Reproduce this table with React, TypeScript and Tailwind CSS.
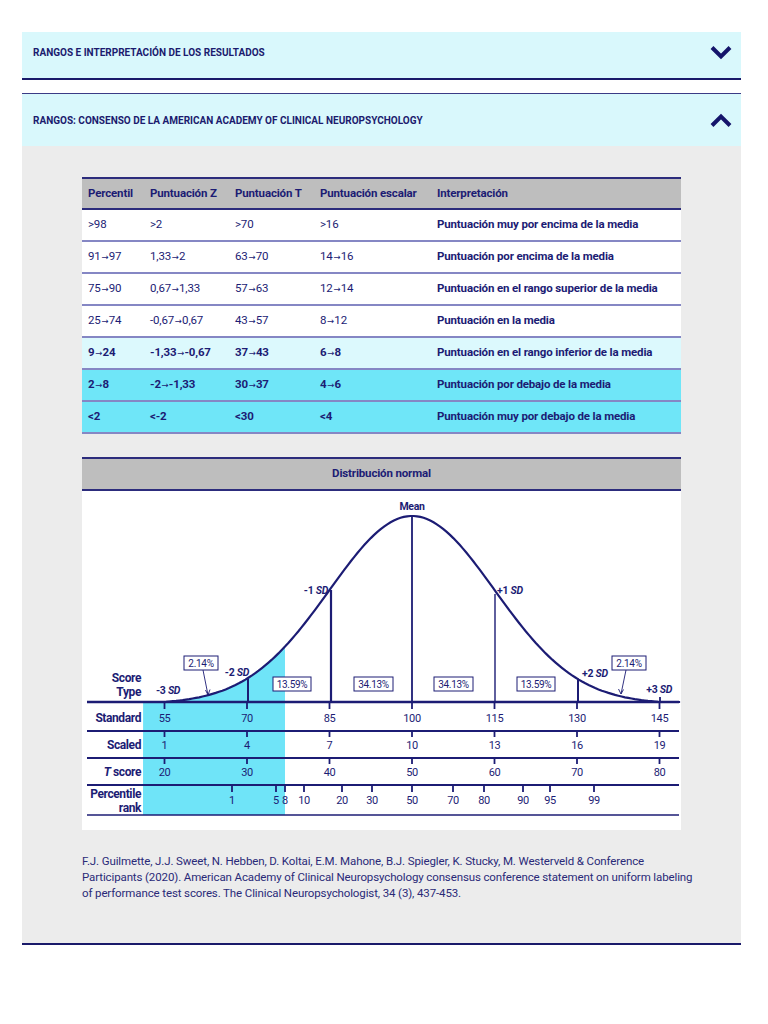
const NAVY = '#1c1c74';
const FONT = 'Roboto, "Liberation Sans", sans-serif';

const rows = [
  { p: '>98', z: '>2', t: '>70', e: '>16', text: 'Puntuación muy por encima de la media', bg: 'bg-white', bold: false },
  { p: '91→97', z: '1,33→2', t: '63→70', e: '14→16', text: 'Puntuación por encima de la media', bg: 'bg-white', bold: false },
  { p: '75→90', z: '0,67→1,33', t: '57→63', e: '12→14', text: 'Puntuación en el rango superior de la media', bg: 'bg-white', bold: false },
  { p: '25→74', z: '-0,67→0,67', t: '43→57', e: '8→12', text: 'Puntuación en la media', bg: 'bg-white', bold: false },
  { p: '9→24', z: '-1,33→-0,67', t: '37→43', e: '6→8', text: 'Puntuación en el rango inferior de la media', bg: 'bg-[#dcf9fd]', bold: true },
  { p: '2→8', z: '-2→-1,33', t: '30→37', e: '4→6', text: 'Puntuación por debajo de la media', bg: 'bg-[#6fe6f8]', bold: true },
  { p: '<2', z: '<-2', t: '<30', e: '<4', text: 'Puntuación muy por debajo de la media', bg: 'bg-[#6fe6f8]', bold: true },
];

// small arrow between range bounds
function Range({ value }: { value: string }) {
  const parts = value.split('→');
  return (
    <span className="whitespace-nowrap">
      {parts.map((part, i) => (
        <span key={i}>
          {i > 0 && <span className="font-['DejaVu_Sans',sans-serif] font-normal text-[8.5px] mx-[0.5px]">→</span>}
          {part}
        </span>
      ))}
    </span>
  );
}

function Chevron({ up }: { up?: boolean }) {
  return (
    <svg width="24" height="15" viewBox="0 0 24 15" className="shrink-0">
      <polyline
        points={up ? '3,12.5 12,3.5 21,12.5' : '3,2.5 12,11.5 21,2.5'}
        fill="none"
        stroke="#15156b"
        strokeWidth="4"
        strokeLinejoin="miter"
      />
    </svg>
  );
}

function AccordionHeader({ title, up }: { title: string; up?: boolean }) {
  return (
    <div className="flex items-center justify-between pl-[11px] pr-[8px] h-full">
      <span className="text-[10px] font-bold tracking-[0px] text-[#1b1b6e] uppercase">{title}</span>
      <Chevron up={up} />
    </div>
  );
}

const X = (z: number) => 412 + 82.5 * z;
const Y = (z: number) => 704 - 188 * Math.exp((-z * z) / 2);

function curvePoints(from: number, to: number) {
  const pts: string[] = [];
  for (let z = from; z < to; z += 0.04) pts.push(`${X(z).toFixed(1)},${Math.min(Y(z), 702).toFixed(1)}`);
  pts.push(`${X(to).toFixed(1)},${Math.min(Y(to), 702).toFixed(1)}`);
  return pts;
}

function PctBox({ x, y, w, label }: { x: number; y: number; w: number; label: string }) {
  return (
    <g>
      <rect x={x} y={y} width={w} height={14} fill="white" stroke={NAVY} strokeWidth="1" />
      <text x={x + w / 2} y={y + 10.5} textAnchor="middle" fontSize="10" fill={NAVY} letterSpacing="-0.3">
        {label}
      </text>
    </g>
  );
}

function SdLabel({ x, y, sign, anchor }: { x: number; y: number; sign: string; anchor?: 'start' | 'middle' | 'end' }) {
  return (
    <text x={x} y={y} textAnchor={anchor ?? 'start'} fontSize="10.5" fontWeight="700" fill={NAVY} letterSpacing="-0.3">
      {sign} <tspan fontStyle="italic">SD</tspan>
    </text>
  );
}

function Chart() {
  const curve = curvePoints(-3.26, 3.25);
  const fillZ = (285 - 412) / 82.5;
  const fill = curvePoints(-3.26, fillZ);
  const sds = [-3, -2, -1, 0, 1, 2, 3];
  const standard = ['55', '70', '85', '100', '115', '130', '145'];
  const scaled = ['1', '4', '7', '10', '13', '16', '19'];
  const tscore = ['20', '30', '40', '50', '60', '70', '80'];
  const pct = [
    ['1', 232], ['5', 276], ['8', 285], ['10', 304], ['20', 342], ['30', 372], ['50', 412],
    ['70', 453], ['80', 484], ['90', 523], ['95', 550], ['99', 594],
  ] as const;

  return (
    <svg width="599" height="339" viewBox="82 491 599 339" className="block" style={{ fontFamily: FONT }}>
      <rect x="82" y="491" width="599" height="339" fill="white" />
      <path d={`M${fill.join(' L')} L285,815 L143,815 Z`} fill="#6fe4f8" />
      <polyline points={curve.join(' ')} fill="none" stroke={NAVY} strokeWidth="2.2" />

      {/* SD verticals */}
      <line x1="412" y1="516" x2="412" y2="702" stroke={NAVY} strokeWidth="1.8" />
      <line x1="331" y1={Y(-1)} x2="331" y2="702" stroke={NAVY} strokeWidth="2.2" />
      <line x1="495" y1={Y(1) + 4} x2="495" y2="702" stroke={NAVY} strokeWidth="1.4" />
      <line x1="248" y1={Y(-2)} x2="248" y2="702" stroke={NAVY} strokeWidth="2" />
      <line x1="578" y1={Y(2)} x2="578" y2="702" stroke={NAVY} strokeWidth="2" />
      <line x1="660" y1="697" x2="660" y2="702" stroke={NAVY} strokeWidth="1.8" />

      {/* horizontal lines */}
      <line x1="87" y1="702" x2="679" y2="702" stroke={NAVY} strokeWidth="2.4" />
      <line x1="87" y1="731" x2="679" y2="731" stroke={NAVY} strokeWidth="2" />
      <line x1="87" y1="758" x2="679" y2="758" stroke={NAVY} strokeWidth="2" />
      <line x1="87" y1="785" x2="679" y2="785" stroke={NAVY} strokeWidth="2" />
      <line x1="87" y1="815" x2="679" y2="815" stroke={NAVY} strokeWidth="1.4" />

      {/* ticks and numbers */}
      {sds.map((z, i) => (
        <g key={z}>
          <line x1={X(z)} y1="702" x2={X(z)} y2="709" stroke={NAVY} strokeWidth="1.8" />
          <line x1={X(z)} y1="731" x2={X(z)} y2="737" stroke={NAVY} strokeWidth="1.8" />
          <line x1={X(z)} y1="758" x2={X(z)} y2="764" stroke={NAVY} strokeWidth="1.8" />
          <text x={X(z)} y="721.5" textAnchor="middle" fontSize="11" fill={NAVY} letterSpacing="-0.4">{standard[i]}</text>
          <text x={X(z)} y="749" textAnchor="middle" fontSize="11" fill={NAVY} letterSpacing="-0.4">{scaled[i]}</text>
          <text x={X(z)} y="776" textAnchor="middle" fontSize="11" fill={NAVY} letterSpacing="-0.4">{tscore[i]}</text>
        </g>
      ))}
      {pct.map(([v, x]) => (
        <g key={v}>
          <line x1={x} y1="785" x2={x} y2="792" stroke={NAVY} strokeWidth="1.8" />
          <text x={x} y="803.5" textAnchor="middle" fontSize="11" fill={NAVY} letterSpacing="-0.4">{v}</text>
        </g>
      ))}

      {/* row labels */}
      <g fontSize="12" fontWeight="700" fill={NAVY} textAnchor="end" letterSpacing="-0.4">
        <text x="141" y="682">Score</text>
        <text x="141" y="696">Type</text>
        <text x="141" y="722">Standard</text>
        <text x="141" y="749">Scaled</text>
        <text x="141" y="776"><tspan fontStyle="italic">T</tspan> score</text>
        <text x="141" y="798">Percentile</text>
        <text x="141" y="812">rank</text>
      </g>

      {/* SD labels */}
      <text x="412" y="510" textAnchor="middle" fontSize="10.5" fontWeight="700" fill={NAVY} letterSpacing="-0.3">Mean</text>
      <SdLabel x={328} y={594} sign="-1" anchor="end" />
      <SdLabel x={497} y={594} sign="+1" />
      <SdLabel x={249} y={676} sign="-2" anchor="end" />
      <SdLabel x={582} y={677} sign="+2" />
      <SdLabel x={156} y={694} sign="-3" />
      <SdLabel x={672} y={693} sign="+3" anchor="end" />

      {/* percentages */}
      <PctBox x={184} y={656} w={34} label="2.14%" />
      <line x1="203" y1="670" x2="208" y2="695" stroke={NAVY} strokeWidth="0.9" />
      <polyline points="205.5,690 208,695 210,689.5" fill="none" stroke={NAVY} strokeWidth="0.9" />
      <PctBox x={273} y={677} w={38} label="13.59%" />
      <PctBox x={354} y={677} w={39} label="34.13%" />
      <PctBox x={434} y={677} w={39} label="34.13%" />
      <PctBox x={517} y={677} w={38} label="13.59%" />
      <PctBox x={612} y={656} w={34} label="2.14%" />
      <line x1="626" y1="670" x2="621" y2="694" stroke={NAVY} strokeWidth="0.9" />
      <polyline points="618.5,689 621,694 623.5,689.5" fill="none" stroke={NAVY} strokeWidth="0.9" />
    </svg>
  );
}

export default function App() {
  return (
    <div className="bg-white min-h-[1024px] pt-[32px] px-[22px] text-[#1c1c74]" style={{ fontFamily: FONT }}>
      <div className="w-[719px]">
        {/* Accordion 1 (closed) */}
        <div className="h-[48px] pb-[5px] bg-[#d9f8fc] border-b-[2.5px] border-[#1a1a6a]">
          <AccordionHeader title="Rangos e interpretación de los resultados" />
        </div>

        {/* Accordion 2 (open) */}
        <div className="mt-[13px] h-[53px] bg-[#d9f8fc] border-t-[1.5px] border-[#3b3b86]">
          <AccordionHeader title="Rangos: consenso de la American Academy of Clinical Neuropsychology" up />
        </div>

        <div className="bg-[#ececec] border-b-[2.5px] border-[#1a1a6a] px-[60px] pt-[31px] pb-[42px]">
          {/* Table */}
          <div className="text-[11.5px] tracking-[-0.15px]">
            <div className="grid grid-cols-[62px_85px_85px_117px_1fr] items-center pl-[6px] h-[33px] bg-[#bebebe] border-t-2 border-b-2 border-[#2c2c7c] font-bold">
              <span>Percentil</span>
              <span>Puntuación Z</span>
              <span>Puntuación T</span>
              <span>Puntuación escalar</span>
              <span>Interpretación</span>
            </div>
            {rows.map((r, i) => (
              <div
                key={i}
                className={`grid grid-cols-[62px_85px_85px_117px_1fr] items-center pl-[6px] h-[32px] border-b-2 border-[#8587c4] ${r.bg} ${r.bold ? 'font-bold' : 'font-normal'}`}
              >
                <Range value={r.p} />
                <Range value={r.z} />
                <Range value={r.t} />
                <Range value={r.e} />
                <span className="font-bold">{r.text}</span>
              </div>
            ))}
          </div>

          {/* Chart */}
          <div className="mt-[23px]">
            <div className="h-[34px] bg-[#bebebe] border-t-2 border-b-2 border-[#2c2c7c] flex items-center justify-center">
              <span className="text-[11.5px] font-bold tracking-[-0.15px]">Distribución normal</span>
            </div>
            <Chart />
          </div>

          {/* Citation */}
          <p className="mt-[23px] mr-[-16px] text-[11.5px] leading-[16px] tracking-[-0.12px] text-[#2a2a78]">
            F.J. Guilmette, J.J. Sweet, N. Hebben, D. Koltai, E.M. Mahone, B.J. Spiegler, K. Stucky, M. Westerveld &amp; Conference Participants (2020). American Academy of Clinical Neuropsychology consensus conference statement on uniform labeling of performance test scores. The Clinical Neuropsychologist, 34 (3), 437-453.
          </p>
        </div>
      </div>
    </div>
  );
}
